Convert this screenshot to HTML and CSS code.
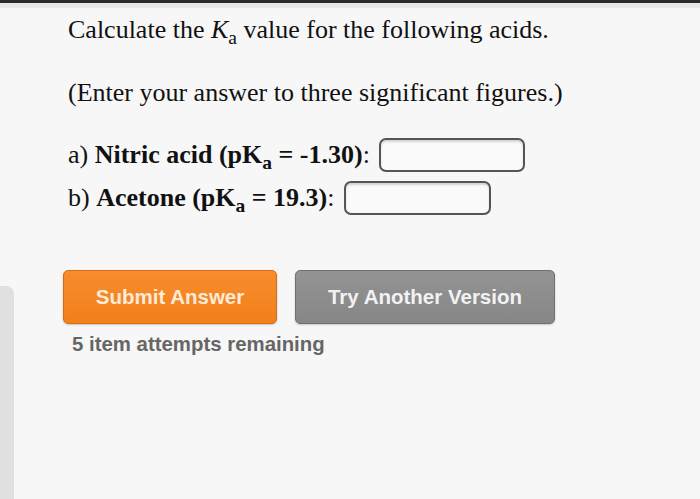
FILE: index.html
```html
<!DOCTYPE html>
<html>
<head>
<meta charset="utf-8">
<link rel="stylesheet" href="styles.css">
</head>
<body>
<div class="topbar"></div>
<div class="page">
  <div class="scroll"></div>
  <main class="content">
    <p class="title">Calculate the <i>K</i><sub>a</sub> value for the following acids.</p>
    <p class="note">(Enter your answer to three significant figures.)</p>
    <div class="row row-a">a) <b>Nitric acid (pK<sub>a</sub> = -1.30)</b>: <span class="field field-a"></span></div>
    <div class="row row-b">b) <b>Acetone (pK<sub>a</sub> = 19.3)</b>: <span class="field field-b"></span></div>
    <div class="buttons">
      <button class="btn btn-submit">Submit Answer</button>
      <button class="btn btn-try">Try Another Version</button>
    </div>
    <p class="attempts">5 item attempts remaining</p>
  </main>
</div>
</body>
</html>
```
FILE: styles.css
```css
html, body {
  margin: 0;
  padding: 0;
}
body {
  width: 700px;
  height: 499px;
  overflow: hidden;
  background: #f7f7f7;
  font-family: "Liberation Serif", "Times New Roman", serif;
  color: #111;
}
.topbar {
  height: 3px;
  background: #2b2b2b;
  border-bottom: 5px solid #e8e8e8;
}
.page {
  position: relative;
  height: 491px;
}
.scroll {
  position: absolute;
  left: 0;
  top: 278px;
  width: 14px;
  bottom: 0;
  background: #e0e0e0;
  border-radius: 0 8px 0 0;
}
.content {
  padding-left: 68px;
}
.title {
  margin: 0;
  padding-top: 7px;
  font-size: 26px;
  line-height: 30px;
}
.title sub, .row sub {
  font-size: 0.75em;
  vertical-align: -0.3em;
  line-height: 0;
}
.note {
  margin: 33px 0 0 0;
  font-size: 26px;
  line-height: 30px;
}
.row {
  font-size: 26px;
  line-height: 34px;
  display: flex;
  align-items: center;
  white-space: pre;
}
.row-a { margin-top: 30px; }
.row-b { margin-top: 9px; }
.field {
  display: inline-block;
  height: 30px;
  border: 2px solid #555;
  border-radius: 7px;
  background: #fafafa;
  box-shadow: inset 0 2px 2px rgba(0,0,0,0.15);
  margin-left: 3px;
}
.field-a { width: 142px; }
.field-b { width: 143px; }
.buttons {
  display: flex;
  gap: 18px;
  margin-top: 55px;
  margin-left: -5px;
}
.btn {
  height: 54px;
  border-radius: 5px;
  font-family: "Liberation Sans", Arial, sans-serif;
  font-weight: bold;
  font-size: 20.5px;
  padding: 0;
}
.btn-submit {
  width: 214px;
  background: linear-gradient(#f78d2e, #f2801b);
  border: 1px solid #d66b12;
  color: #fcebd9;
  box-shadow: 0 1px 2px rgba(0,0,0,0.2);
}
.btn-try {
  width: 260px;
  background: linear-gradient(#939393, #878787);
  border: 1px solid #707070;
  color: #f2f2f2;
  box-shadow: 0 1px 2px rgba(0,0,0,0.2);
}
.attempts {
  margin: 8px 0 0 4px;
  font-family: "Liberation Sans", Arial, sans-serif;
  font-weight: bold;
  font-size: 20.4px;
  line-height: 24px;
  color: #666;
}
```
